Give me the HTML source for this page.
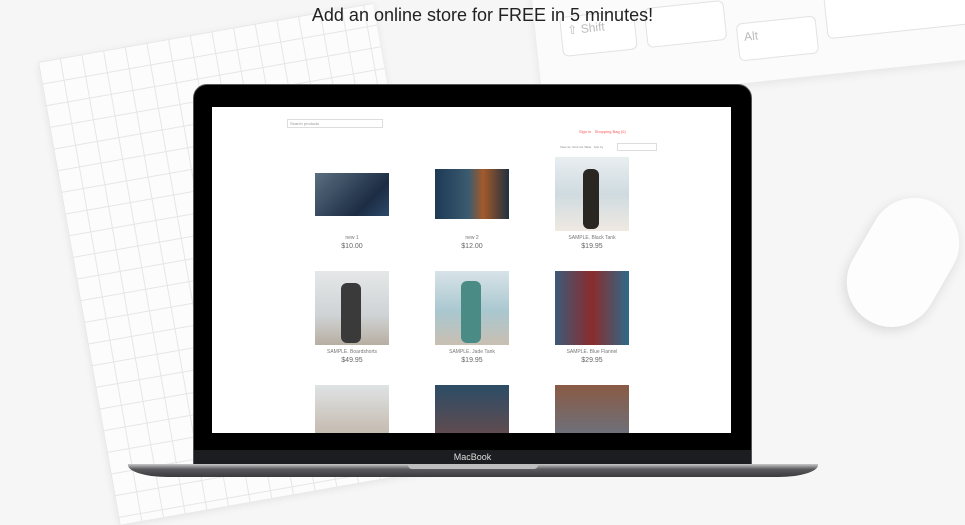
<!DOCTYPE html>
<html><head><style>
*{margin:0;padding:0;box-sizing:border-box}
body{width:965px;height:500px;overflow:hidden;background:#f6f6f6;font-family:"Liberation Sans",sans-serif;position:relative}
.abs{position:absolute}
.pad{left:38px;top:62px;width:340px;height:470px;background:#fcfcfc;transform:rotate(-10deg);transform-origin:0 0;
background-image:linear-gradient(#e6e6e6 1px,transparent 1px),linear-gradient(90deg,#e6e6e6 1px,transparent 1px);background-size:22px 22px;box-shadow:0 2px 8px rgba(0,0,0,.08)}
.kb{left:530px;top:-20px;width:470px;height:125px;background:#fbfbfb;border-radius:10px;box-shadow:0 2px 10px rgba(0,0,0,.08);transform:rotate(-6deg);transform-origin:0 0}
.key{position:absolute;background:#fff;border:1px solid #e2e2e2;border-radius:6px;color:#bbb;font-size:12px;padding:6px}
.mouse{left:858px;top:195px;width:90px;height:135px;background:#fdfdfd;border-radius:45px;box-shadow:0 4px 12px rgba(0,0,0,.12);transform:rotate(30deg)}
h1{position:absolute;left:0;width:965px;top:5px;text-align:center;font-weight:normal;font-size:18px;color:#222}
.bezel{left:193px;top:84px;width:559px;height:380px;background:#000;border-radius:14px 14px 0 0;border:1px solid #555}
.chin{left:194px;top:450px;width:557px;height:14px;background:#1c1d20;color:#ddd;font-size:9px;text-align:center;line-height:14px}
.base{left:128px;top:464px;width:690px;height:13px;background:linear-gradient(#c9c9cb,#5a5a5e 40%,#3a3a3e);border-radius:0 0 40px 40px / 0 0 12px 12px}
.notch{left:408px;top:464px;width:130px;height:5px;background:#bdbdc0;border-radius:0 0 4px 4px}
.screen{left:212px;top:107px;width:519px;height:326px;background:#fff;overflow:hidden}
.img{position:absolute;width:74px;height:74px}
.nm{position:absolute;width:120px;text-align:center;font-size:5px;color:#777}
.pr{position:absolute;width:120px;text-align:center;font-size:7px;color:#666}
</style></head><body>
<div class="abs pad"></div>
<div class="abs kb">
<div class="key" style="left:25px;top:40px;width:75px;height:40px">⇧ Shift</div>
<div class="key" style="left:110px;top:40px;width:80px;height:40px"></div>
<div class="key" style="left:200px;top:65px;width:80px;height:38px">Alt</div>
<div class="key" style="left:290px;top:30px;width:160px;height:60px"></div>
</div>
<div class="abs mouse"></div>
<h1>Add an online store for FREE in 5 minutes!</h1>
<div class="abs bezel"></div>
<div class="abs chin">MacBook</div>
<div class="abs base"></div>
<div class="abs notch"></div>
<div class="abs screen">
<div class="abs" style="left:75px;top:12px;width:96px;height:9px;border:1px solid #ddd;font-size:4px;color:#999;padding:1px 2px">Search products</div>
<div class="abs" style="left:367px;top:22px;font-size:4px;color:#f55">Sign in &nbsp; Shopping Bag (0)</div>
<div class="abs" style="left:348px;top:38px;font-size:3px;color:#888">View as: Grid List Table &nbsp; Sort by</div>
<div class="abs" style="left:405px;top:36px;width:40px;height:8px;border:1px solid #ddd"></div>
<div class="img" style="left:103px;top:66px;height:43px;background:linear-gradient(135deg,#5a6f80,#1c2c44 70%,#2d4a6a)"></div>
<div class="img" style="left:223px;top:62px;height:50px;background:linear-gradient(90deg,#1d3a55,#3a5b70 45%,#a35a2a 65%,#203040)"></div>
<div class="img" style="left:343px;top:50px;background:linear-gradient(#e9eef1,#cfdbe0 50%,#efe9e2);"><div class="abs" style="left:28px;top:12px;width:16px;height:60px;background:#2a2622;border-radius:6px"></div></div>
<div class="nm" style="left:80px;top:128px">new 1</div><div class="pr" style="left:80px;top:136px">$10.00</div>
<div class="nm" style="left:200px;top:128px">new 2</div><div class="pr" style="left:200px;top:136px">$12.00</div>
<div class="nm" style="left:320px;top:128px">SAMPLE. Black Tank</div><div class="pr" style="left:320px;top:136px">$19.95</div>
<div class="img" style="left:103px;top:164px;background:linear-gradient(#e5e7e8,#cfd3d5 60%,#b8aea2)"><div class="abs" style="left:26px;top:12px;width:20px;height:60px;background:#3b3a3a;border-radius:6px"></div></div>
<div class="img" style="left:223px;top:164px;background:linear-gradient(#d7e3e8,#a9c7cf 55%,#c9bfb2)"><div class="abs" style="left:26px;top:10px;width:20px;height:62px;background:#4a8b86;border-radius:6px"></div></div>
<div class="img" style="left:343px;top:164px;background:linear-gradient(90deg,#3d5a7a,#8a2c2c 50%,#2d6a8a)"></div>
<div class="nm" style="left:80px;top:242px">SAMPLE. Boardshorts</div><div class="pr" style="left:80px;top:250px">$49.95</div>
<div class="nm" style="left:200px;top:242px">SAMPLE. Jade Tank</div><div class="pr" style="left:200px;top:250px">$19.95</div>
<div class="nm" style="left:320px;top:242px">SAMPLE. Blue Flannel</div><div class="pr" style="left:320px;top:250px">$29.95</div>
<div class="img" style="left:103px;top:278px;background:linear-gradient(#dfe3e4,#b7a594)"></div>
<div class="img" style="left:223px;top:278px;background:linear-gradient(#2c4d66,#7b4a44)"></div>
<div class="img" style="left:343px;top:278px;background:linear-gradient(#8a5a44,#5e7b96)"></div>
</div>
</body></html>
